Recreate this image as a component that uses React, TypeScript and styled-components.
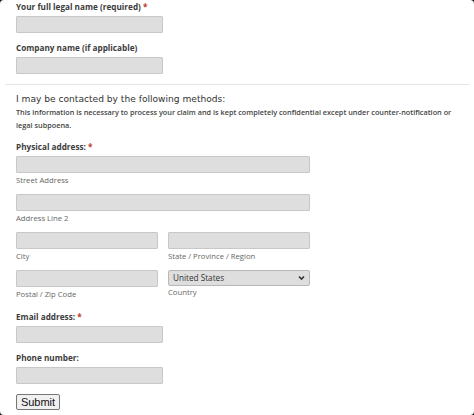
import styled, { createGlobalStyle } from "styled-components";

const GlobalStyle = createGlobalStyle`
  html, body {
    margin: 0;
    padding: 0;
    background: #1c1c1c;
  }
`;

const Page = styled.form`
  box-sizing: border-box;
  height: 415px;
  background: #fff;
  border-radius: 4px;
  padding: 1px 0 0;
  font-family: "Open Sans", "DejaVu Sans", sans-serif;
  color: #3a3a3a;
`;

const Section = styled.div`
  padding: 0 16px;
`;

const Field = styled.div<{ $gap?: number }>`
  margin-top: ${(p) => p.$gap ?? 9}px;
`;

const Label = styled.label`
  display: block;
  font-size: 8.2px;
  font-weight: 700;
  line-height: 12px;
  margin-bottom: 3px;
  color: #3c3c3c;
`;

const Req = styled.span`
  color: #c0392b;
`;

const Input = styled.input<{ $w?: number }>`
  display: block;
  box-sizing: border-box;
  width: ${(p) => (p.$w ? `${p.$w}px` : "100%")};
  height: 17px;
  margin: 0;
  padding: 0 4px;
  background: #dedede;
  border: 1px solid #c8c8c8;
  border-radius: 1px;
  font: inherit;
`;

const Divider = styled.hr`
  margin: 10px 5px 0;
  border: 0;
  border-top: 1px solid #e6e6e6;
`;

const Heading = styled.div`
  margin-top: 7px;
  font-family: "DejaVu Sans", Verdana, sans-serif;
  font-size: 9.1px;
  line-height: 14px;
  color: #333;
`;

const Note = styled.p`
  margin: 0;
  font-size: 7.3px;
  font-weight: 600;
  line-height: 13px;
  color: #444;
  white-space: nowrap;
`;

const AddressGrid = styled.div`
  display: grid;
  grid-template-columns: 142px 142px;
  column-gap: 10px;
  row-gap: 9px;
  margin-top: 2px;
`;

const Cell = styled.div<{ $span?: boolean }>`
  grid-column: ${(p) => (p.$span ? "1 / 3" : "auto")};
`;

const Caption = styled.div<{ $top?: number }>`
  margin-top: ${(p) => p.$top ?? 2}px;
  font-size: 7.7px;
  line-height: 10px;
  color: #666;
`;

const SelectBox = styled.div`
  position: relative;
  box-sizing: border-box;
  height: 16px;
  padding: 0 4px;
  background: #dedede;
  border: 1px solid #b8b8b8;
  border-radius: 2px;
  font-size: 8.2px;
  line-height: 14px;
  color: #333;
`;

const Chevron = styled.svg`
  position: absolute;
  right: 4px;
  top: 4px;
`;

const SubmitButton = styled.button`
  display: block;
  margin-top: 10px;
  box-sizing: border-box;
  width: 44px;
  height: 16px;
  padding: 0;
  font-family: "Liberation Sans", Arial, sans-serif;
  font-size: 11px;
  line-height: 14px;
  color: #111;
  background: #f0f0f0;
  border: 1px solid #767676;
  border-radius: 2px;
`;

export default function App() {
  return (
    <>
      <GlobalStyle />
      <Page onSubmit={(e) => e.preventDefault()}>
        <Section>
          <Field $gap={0}>
            <Label>
              Your full legal name (required) <Req>*</Req>
            </Label>
            <Input $w={147} />
          </Field>
          <Field>
            <Label>Company name (if applicable)</Label>
            <Input $w={147} />
          </Field>
        </Section>
        <Divider />
        <Section>
          <Heading>I may be contacted by the following methods:</Heading>
          <Note>
            This information is necessary to process your claim and is kept completely confidential
            except under counter-notification or
            <br />
            legal subpoena.
          </Note>
          <Field>
            <Label>
              Physical address: <Req>*</Req>
            </Label>
            <AddressGrid>
              <Cell $span>
                <Input />
                <Caption>Street Address</Caption>
              </Cell>
              <Cell $span>
                <Input />
                <Caption>Address Line 2</Caption>
              </Cell>
              <Cell>
                <Input />
                <Caption>City</Caption>
              </Cell>
              <Cell>
                <Input />
                <Caption>State / Province / Region</Caption>
              </Cell>
              <Cell>
                <Input />
                <Caption>Postal / Zip Code</Caption>
              </Cell>
              <Cell>
                <SelectBox>
                  United States
                  <Chevron width="7" height="6" viewBox="0 0 7 6">
                    <path d="M1 1.5 L3.5 4 L6 1.5" fill="none" stroke="#333" strokeWidth="1.6" />
                  </Chevron>
                </SelectBox>
                <Caption $top={1}>Country</Caption>
              </Cell>
            </AddressGrid>
          </Field>
          <Field $gap={12}>
            <Label>
              Email address: <Req>*</Req>
            </Label>
            <Input $w={147} />
          </Field>
          <Field>
            <Label>Phone number:</Label>
            <Input $w={147} />
          </Field>
          <SubmitButton type="submit">Submit</SubmitButton>
        </Section>
      </Page>
    </>
  );
}
